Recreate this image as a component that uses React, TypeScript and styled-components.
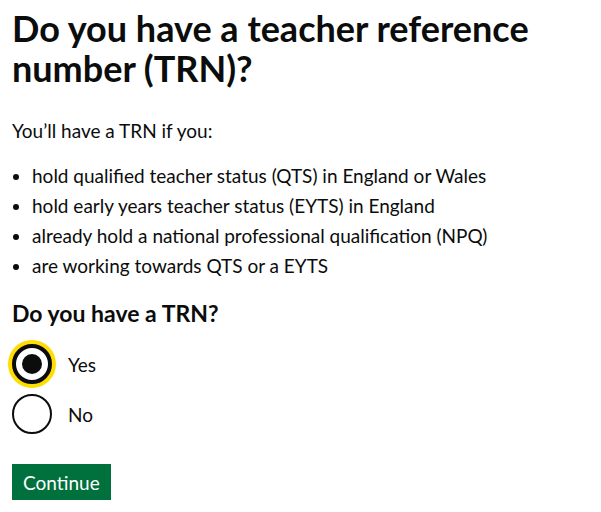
import React, { useState } from 'react';
import styled, { createGlobalStyle, css } from 'styled-components';

const GlobalStyle = createGlobalStyle`
  body {
    margin: 0;
    background: #ffffff;
    color: #0b0c0c;
    font-family: Lato, "Liberation Sans", Arial, sans-serif;
  }
`;

const Page = styled.main`
  padding: 8px 12px 0;
`;

const Heading = styled.h1`
  margin: 0 0 30px;
  font-size: 36px;
  line-height: 40px;
  font-weight: 700;
`;

const Body = styled.p`
  margin: 0 0 20px;
  font-size: 19px;
  line-height: 25px;
`;

const BulletList = styled.ul`
  margin: 0 0 20px;
  padding-left: 20px;
  list-style-type: disc;
  font-size: 19px;
  line-height: 25px;
`;

const BulletItem = styled.li`
  margin-bottom: 5px;

  &:last-child {
    margin-bottom: 0;
  }
`;

const Fieldset = styled.fieldset`
  margin: 0;
  padding: 0;
  border: 0;
`;

const Legend = styled.legend`
  margin: 0 0 16px;
  padding: 0;
  font-size: 23px;
  line-height: 30px;
  font-weight: 700;
`;

const Radios = styled.div`
  display: flex;
  flex-direction: column;
  row-gap: 10px;
`;

const RadioItem = styled.label`
  display: flex;
  align-items: center;
  min-height: 40px;
  cursor: pointer;
`;

const HiddenInput = styled.input`
  position: absolute;
  opacity: 0;
  width: 0;
  height: 0;
  margin: 0;
`;

const RadioMark = styled.span<{ $checked: boolean; $focused: boolean }>`
  position: relative;
  box-sizing: border-box;
  flex: 0 0 40px;
  width: 40px;
  height: 40px;
  border: 2px solid #0b0c0c;
  border-radius: 50%;
  background: #ffffff;

  ${({ $focused }) => $focused && css`
    border-width: 4px;
    box-shadow: 0 0 0 4px #ffdd00;
  `}

  &::after {
    content: '';
    position: absolute;
    top: 50%;
    left: 50%;
    width: 20px;
    height: 20px;
    margin: -10px 0 0 -10px;
    border-radius: 50%;
    background: #0b0c0c;
    opacity: ${({ $checked }) => ($checked ? 1 : 0)};
  }
`;

const RadioLabel = styled.span`
  padding: 5px 15px 5px 16px;
  font-size: 19px;
  line-height: 25px;
`;

const Button = styled.button`
  margin-top: 30px;
  padding: 7px 9px 6px;
  border: 2px solid transparent;
  border-radius: 0;
  background: #00703c;
  box-shadow: 0 2px 0 #002d18;
  color: #ffffff;
  font-family: inherit;
  font-size: 19px;
  line-height: 19px;
  cursor: pointer;
`;

const options = ['Yes', 'No'];

const App: React.FC = () => {
  const [value, setValue] = useState('Yes');

  return (
    <Page>
      <GlobalStyle />
      <Heading>Do you have a teacher reference number (TRN)?</Heading>
      <Body>You’ll have a TRN if you:</Body>
      <BulletList>
        <BulletItem>hold qualified teacher status (QTS) in England or Wales</BulletItem>
        <BulletItem>hold early years teacher status (EYTS) in England</BulletItem>
        <BulletItem>already hold a national professional qualification (NPQ)</BulletItem>
        <BulletItem>are working towards QTS or a EYTS</BulletItem>
      </BulletList>
      <Fieldset>
        <Legend>Do you have a TRN?</Legend>
        <Radios>
          {options.map((option) => (
            <RadioItem key={option}>
              <HiddenInput
                type="radio"
                name="has-trn"
                value={option}
                checked={value === option}
                onChange={() => setValue(option)}
              />
              <RadioMark $checked={value === option} $focused={value === option} />
              <RadioLabel>{option}</RadioLabel>
            </RadioItem>
          ))}
        </Radios>
      </Fieldset>
      <Button type="submit">Continue</Button>
    </Page>
  );
};

export default App;
